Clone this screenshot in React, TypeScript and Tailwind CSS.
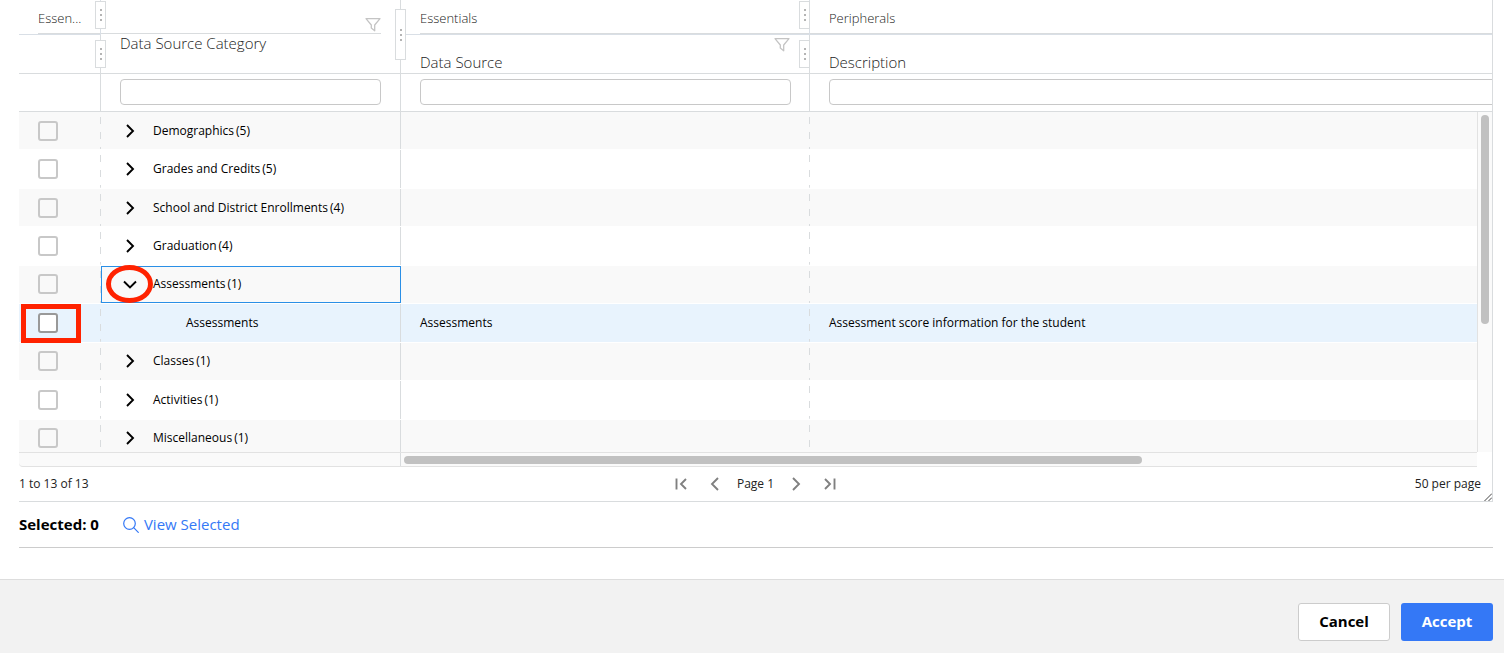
import clsx from "clsx";

type Row = {
  category: string;
  count?: number;
  source?: string;
  description?: string;
  open?: boolean;
};

const rows: Row[] = [
  { category: "Demographics", count: 5 },
  { category: "Grades and Credits", count: 5 },
  { category: "School and District Enrollments", count: 4 },
  { category: "Graduation", count: 4 },
  { category: "Assessments", count: 1, open: true },
  {
    category: "Assessments",
    source: "Assessments",
    description: "Assessment score information for the student",
  },
  { category: "Classes", count: 1 },
  { category: "Activities", count: 1 },
  { category: "Miscellaneous", count: 1 },
];

const columns = "grid-cols-[82px_300px_409px_1fr]";
const dashed =
  "bg-[image:repeating-linear-gradient(to_bottom,transparent_0_5px,#d9dcde_5px_12px,transparent_12px_15px)] bg-[size:1px_100%] bg-right bg-no-repeat";

function Filter() {
  return (
    <svg className="h-4 w-4 shrink-0" viewBox="0 0 16 16" fill="none" stroke="#c4c4c4" strokeWidth="1.3" strokeLinejoin="round">
      <path d="M1 1.7h14L9.7 8v5.8L6.3 11V8z" />
    </svg>
  );
}

function Handle({ className }: { className: string }) {
  return (
    <span className={clsx("absolute z-10 flex flex-col items-center justify-center gap-[3px] border border-[#d9dcde] bg-white", className)}>
      <i className="h-[2px] w-[2px] bg-[#b4b4b4]" />
      <i className="h-[2px] w-[2px] bg-[#b4b4b4]" />
      <i className="h-[2px] w-[2px] bg-[#b4b4b4]" />
    </span>
  );
}

function Chevron({ d, bar }: { d: string; bar?: string }) {
  return (
    <svg className="h-4 w-4" viewBox="0 0 16 16" fill="none" stroke="currentColor" strokeWidth="1.9">
      <path d={d} />
      {bar && <path d={bar} />}
    </svg>
  );
}

function GridHead() {
  return (
    <thead className={clsx("grid grid-rows-[35px_39px_38px] text-left text-[#222]", columns)}>
      <tr className="contents">
        <th className="relative border-r border-b border-[#d9dfe6] pl-[19px] font-light">
          <div className="h-[34px] border-b border-[#d9dcde] text-[13px] leading-9">Essen...</div>
          <Handle className="top-px -right-[6px] h-7 w-[11px]" />
        </th>
        <th className="relative row-span-2 border-r border-b border-[#d9dcde] font-light">
          <div className="mr-[19px] flex h-[34px] items-end justify-end border-b border-[#d9dcde]">
            <button type="button" aria-label="Filter category">
              <Filter />
            </button>
          </div>
          <div className="pl-[19px] text-[15px] leading-[18px]">Data Source Category</div>
          <Handle className="top-[9px] -right-[6px] h-[51px] w-[11px]" />
        </th>
        <th className="relative border-r border-b border-[#d9dfe6] pl-[19px] font-light">
          <div className="h-[34px] border-b border-[#d9dcde] text-[13px] leading-9">Essentials</div>
          <Handle className="top-px -right-px h-7 w-[11px]" />
        </th>
        <th className="border-b border-[#d9dfe6] font-light">
          <div className="h-[34px] border-b border-[#d9dcde] pl-[19px] text-[13px] leading-9">Peripherals</div>
        </th>
      </tr>
      <tr className="contents">
        <th className="relative border-r border-b border-[#d9dcde]">
          <Handle className="top-[5px] -right-[6px] h-7 w-[11px]" />
        </th>
        <th className="relative flex justify-between border-r border-b border-[#d9dcde] pr-[19px] pl-[19px] font-light">
          <span className="self-end text-[15px] leading-[22px]">Data Source</span>
          <button type="button" aria-label="Filter source" className="self-start pt-[2px]">
            <Filter />
          </button>
          <Handle className="top-[5px] -right-px h-7 w-[11px]" />
        </th>
        <th className="flex border-b border-[#d9dcde] pl-[19px] font-light">
          <span className="self-end text-[15px] leading-[22px]">Description</span>
        </th>
      </tr>
      <tr className="contents">
        <td className="border-r border-b border-[#d9dcde]" />
        <td className="border-r border-b border-[#d9dcde] pt-[5px] pr-[19px] pl-[19px]">
          <input aria-label="Data Source Category" className="block h-[26px] w-full rounded border border-[#c8c8c8] px-2 text-xs" />
        </td>
        <td className="border-r border-b border-[#d9dcde] pt-[5px] pr-[18px] pl-[19px]">
          <input aria-label="Data Source" className="block h-[26px] w-full rounded border border-[#c8c8c8] px-2 text-xs" />
        </td>
        <td className="overflow-hidden border-b border-[#d9dcde] pt-[5px] pl-[19px]">
          <input aria-label="Description" className="block h-[26px] w-[110%] rounded border border-[#c8c8c8] px-2 text-xs" />
        </td>
      </tr>
    </thead>
  );
}

function GridRow({ row, striped }: { row: Row; striped: boolean }) {
  const leaf = row.count === undefined;
  return (
    <tr className={clsx("grid border-b border-white text-xs text-black", columns, leaf ? "bg-[#e8f3fd]" : striped ? "bg-[#f9f9f9]" : "bg-white")}>
      <td className={clsx("relative flex items-center pl-[19px]", dashed)}>
        <input
          type="checkbox"
          aria-label={`Select ${row.category}`}
          className={clsx("h-5 w-5 appearance-none rounded-[3px] border-2", leaf ? "border-[#999] bg-white" : "border-[#c8c8c8]")}
        />
        {leaf && <span className="absolute top-0 left-[2px] h-[39px] w-[60px] border-[5px] border-[#ff2200]" />}
      </td>
      <td className={clsx("relative flex items-center", row.open ? "border border-[#2a8fe6] pl-5" : "border-r border-[#d9dcde] pl-[21px]")}>
        {leaf ? (
          <span className="pl-16">{row.category}</span>
        ) : (
          <>
            <button type="button" aria-label={row.open ? "Collapse" : "Expand"} aria-expanded={!!row.open}>
              <Chevron d={row.open ? "M2 5.5 8 11.5l6-6" : "M5 2l6 6-6 6"} />
            </button>
            <span className="pl-[15px]">{row.category}</span>
            <span className="pl-[2px]">({row.count})</span>
          </>
        )}
        {row.open && <span className="absolute -top-[2px] left-1 h-[38px] w-[47px] rounded-[50%] border-[5px] border-[#ff2200]" />}
      </td>
      <td className={clsx("flex items-center pl-[19px]", dashed)}>{row.source}</td>
      <td className="flex items-center pl-[19px]">{row.description}</td>
    </tr>
  );
}

function Pager() {
  return (
    <div className="grid h-[34px] grid-cols-3 items-center text-xs text-[#222]">
      <span>1 to 13 of 13</span>
      <div className="flex items-center justify-center text-[#808080]">
        <button type="button" aria-label="First page" className="mr-[18px]">
          <Chevron d="M13 3 8 8l5 5" bar="M3.5 2.5v11" />
        </button>
        <button type="button" aria-label="Previous page" className="mr-[14px]">
          <Chevron d="M11 2 5 8l6 6" />
        </button>
        <span className="text-[#222]">Page 1</span>
        <button type="button" aria-label="Next page" className="ml-[14px]">
          <Chevron d="M5 2l6 6-6 6" />
        </button>
        <button type="button" aria-label="Last page" className="ml-[18px]">
          <Chevron d="M3 3l5 5-5 5" bar="M12.5 2.5v11" />
        </button>
      </div>
      <span className="pr-[11px] text-right">50 per page</span>
    </div>
  );
}

export default function App() {
  return (
    <div className="bg-white font-['Open_Sans',sans-serif]">
      <main className="mr-[11px] ml-[19px]">
        <div className="relative border-r border-b border-[#d9dcde]">
          <div className="h-[452px] overflow-hidden">
            <table className="block">
              <GridHead />
              <tbody className="grid h-[346px] grid-rows-[repeat(9,1fr)]">
                {rows.map((row, i) => (
                  <GridRow key={i} row={row} striped={i % 2 === 0} />
                ))}
              </tbody>
            </table>
          </div>

          {/* Vertical scrollbar over the grid body */}
          <div className="absolute top-28 right-0 h-[340px] w-[15px] border-l border-[#e2e2e2] bg-[#fafafa] pt-[3px] pl-[3px]">
            <div className="h-[209px] w-2 rounded-full bg-[#c1c1c1]" />
          </div>

          {/* Horizontal scrollbar */}
          <div className="mr-[15px] flex h-[15px] rounded-bl border-y border-[#e2e2e2] bg-[#fafafa]">
            <div className="w-[382px] shrink-0 border-r border-[#d9dcde]" />
            <div className="flex-1 px-[3px] pt-[3px]">
              <div className="h-2 w-[69%] rounded-full bg-[#c1c1c1]" />
            </div>
          </div>

          <Pager />
          <svg className="absolute right-0 bottom-0 h-2 w-2" viewBox="0 0 8 8" stroke="#444" strokeWidth="1">
            <path d="M0.5 8 8 0.5M4.5 8 8 4.5" />
          </svg>
        </div>

        <div className="flex h-[46px] items-center border-b border-[#ccc] text-[15px]">
          <span className="font-bold text-black">Selected: 0</span>
          <a href="#" className="ml-6 flex items-center gap-[5px] text-[#3478f6]">
            <svg className="h-4 w-4" viewBox="0 0 16 16" fill="none" stroke="currentColor" strokeWidth="1.2" strokeLinecap="round">
              <circle cx="6.5" cy="6.5" r="5.8" />
              <path d="m10.7 10.7 4.6 4.6" />
            </svg>
            View Selected
          </a>
        </div>
      </main>

      <footer className="mt-[31px] flex justify-end gap-[11px] border-t border-[#ddd] bg-[#f2f2f2] pt-[23px] pr-[11px] pb-3 text-[15px] font-bold">
        <button type="button" className="h-[38px] w-[92px] rounded-[3px] border border-[#ccc] bg-white pb-[2px] text-black">
          Cancel
        </button>
        <button type="button" className="h-[38px] w-[92px] rounded-[3px] bg-[#3478f6] pb-[2px] text-white">
          Accept
        </button>
      </footer>
    </div>
  );
}
